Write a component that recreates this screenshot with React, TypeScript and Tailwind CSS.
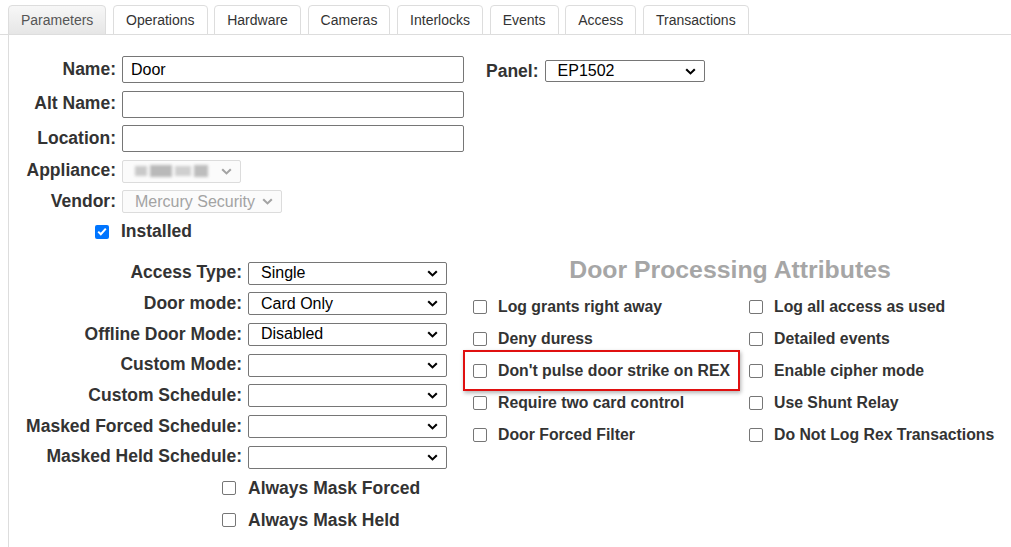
import React from "react";

const TABS = ["Parameters", "Operations", "Hardware", "Cameras", "Interlocks", "Events", "Access", "Transactions"];

const LOWER_SELECTS: [string, string][] = [
    ["Access Type:", "Single"],
    ["Door mode:", "Card Only"],
    ["Offline Door Mode:", "Disabled"],
    ["Custom Mode:", ""],
    ["Custom Schedule:", ""],
    ["Masked Forced Schedule:", ""],
    ["Masked Held Schedule:", ""],
];

const ATTRS = [
    "Log grants right away",
    "Log all access as used",
    "Deny duress",
    "Detailed events",
    "Don't pulse door strike on REX",
    "Enable cipher mode",
    "Require two card control",
    "Use Shunt Relay",
    "Door Forced Filter",
    "Do Not Log Rex Transactions",
];

function Chevron({ color = "#000" }: { color?: string }) {
    return (
        <svg width="11" height="7" viewBox="0 0 11 7" className="shrink-0">
            <polyline points="1.2,1.2 5.5,5.4 9.8,1.2" fill="none" stroke={color} strokeWidth="2.1" />
        </svg>
    );
}

function Select({ value, width, disabled, blurred }: { value: string; width: string; disabled?: boolean; blurred?: boolean }) {
    return (
        <div
            className={`flex h-[23px] items-center justify-between rounded-[2px] border pl-[12px] pr-[8px] text-[16px] ${width} ${
                disabled ? "border-[#dcdcdc] bg-[#fbfbfb] text-[#a3a3a3]" : "border-[#767676] bg-white text-black"
            }`}
        >
            {blurred ? (
                <span className="flex items-center gap-[3px] blur-[1.5px]">
                    <span className="h-[10px] w-[12px] bg-[#c9c9c9]" />
                    <span className="h-[12px] w-[22px] bg-[#b9b9b9]" />
                    <span className="h-[10px] w-[16px] bg-[#cfcfcf]" />
                    <span className="h-[12px] w-[14px] bg-[#bdbdbd]" />
                </span>
            ) : (
                <span className="whitespace-nowrap">{value}</span>
            )}
            <Chevron color={disabled ? "#a3a3a3" : "#000"} />
        </div>
    );
}

function Box({ checked }: { checked?: boolean }) {
    if (checked) {
        return (
            <span className="flex h-[14px] w-[14px] shrink-0 items-center justify-center rounded-[2px] bg-[#0075ff]">
                <svg width="10" height="9" viewBox="0 0 10 9">
                    <polyline points="1.2,4.6 3.8,7.2 8.8,1.6" fill="none" stroke="#fff" strokeWidth="2" />
                </svg>
            </span>
        );
    }
    return <span className="h-[14px] w-[14px] shrink-0 rounded-[2px] border border-[#767676] bg-white" />;
}

export default function App() {
    return (
        <div className="h-[547px] w-[1011px] overflow-hidden bg-white text-[#333] [font-family:'Liberation_Sans',Arial,sans-serif]">
            {/* tab bar */}
            <div className="flex items-end gap-[6.7px] border-b border-[#dddddd] pl-[8px] pt-[5px]">
                {TABS.map((t, i) => (
                    <div
                        key={t}
                        className={`-mb-px flex h-[30px] items-center rounded-t-[4px] border border-[#dddddd] px-[12px] text-[14px] ${
                            i === 0 ? "bg-gradient-to-b from-[#f7f7f7] to-[#e6e6e6] text-[#555]" : "bg-white text-[#333]"
                        }`}
                    >
                        {t}
                    </div>
                ))}
            </div>

            {/* panel */}
            <div className="ml-[8px] h-[512px] border-l border-[#dddddd] pt-[21px]">
                <div className="flex items-start">
                    <div className="grid grid-cols-[107px_auto] items-center gap-x-[6px] gap-y-[7.5px] text-[17.5px] font-bold">
                        <div className="text-right leading-none">Name:</div>
                        <div className="flex h-[27px] w-[342px] items-center rounded-[2px] border border-[#767676] pl-[8px] text-[16px] font-normal text-black">
                            Door
                        </div>
                        <div className="text-right leading-none">Alt Name:</div>
                        <div className="h-[27px] w-[342px] rounded-[2px] border border-[#767676]" />
                        <div className="text-right leading-none">Location:</div>
                        <div className="h-[27px] w-[342px] rounded-[2px] border border-[#767676]" />
                        <div className="text-right leading-none">Appliance:</div>
                        <div className="font-normal">
                            <Select value="" width="w-[119px]" disabled blurred />
                        </div>
                        <div className="text-right leading-none">Vendor:</div>
                        <div className="font-normal">
                            <Select value="Mercury Security" width="w-[160px]" disabled />
                        </div>
                        <div />
                        <div className="-ml-[27px] mt-[1px] flex h-[20px] items-center gap-[12px]">
                            <Box checked />
                            <span>Installed</span>
                        </div>
                    </div>

                    <div className="ml-[22px] mt-[2px] flex items-center gap-[6px]">
                        <span className="text-[17.5px] font-bold">Panel:</span>
                        <div className="[&>div]:h-[22px]">
                            <Select value="EP1502" width="w-[160px]" />
                        </div>
                    </div>
                </div>

                <div className="mt-[13px] flex items-start">
                    {/* left selects */}
                    <div className="pt-[7px]">
                        <div className="grid grid-cols-[233px_auto] items-center gap-x-[6px] gap-y-[7.7px]">
                            {LOWER_SELECTS.map(([label, value]) => (
                                <React.Fragment key={label}>
                                    <div className="whitespace-nowrap text-right text-[17.5px] font-bold leading-none">{label}</div>
                                    <Select value={value} width="w-[199px]" />
                                </React.Fragment>
                            ))}
                        </div>
                        <div className="mt-[7px] flex flex-col gap-[8px] pl-[213px] text-[17.5px] font-bold">
                            <div className="flex h-[24px] items-center gap-[12px]">
                                <Box />
                                <span>Always Mask Forced</span>
                            </div>
                            <div className="flex h-[24px] items-center gap-[12px]">
                                <Box />
                                <span>Always Mask Held</span>
                            </div>
                        </div>
                    </div>

                    {/* door processing attributes */}
                    <div className="ml-[26px]">
                        <div className="flex h-[30px] w-[514px] items-center justify-center text-[24.8px] font-bold text-[#a6a6a6]">
                            Door Processing Attributes
                        </div>
                        <div className="mt-[10px] grid grid-cols-[276px_238px] gap-y-[8px] text-[15.8px] font-bold">
                            {ATTRS.map((a) => (
                                <div key={a} className="relative flex h-[24px] items-center gap-[11px] whitespace-nowrap">
                                    <Box />
                                    <span>{a}</span>
                                    {a === "Don't pulse door strike on REX" && (
                                        <div className="absolute -top-[9px] -left-[10px] h-[41px] w-[277px] border-2 border-[#e01010] shadow-[1px_2px_4px_rgba(0,0,0,0.3)]" />
                                    )}
                                </div>
                            ))}
                        </div>
                    </div>
                </div>
            </div>
        </div>
    );
}
